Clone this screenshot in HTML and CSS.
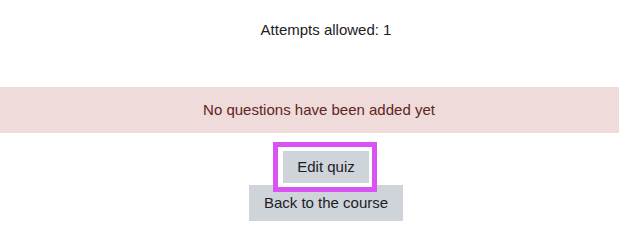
FILE: index.html
```html
<!DOCTYPE html>
<html>
<head>
<meta charset="utf-8">
<link rel="stylesheet" href="styles.css">
</head>
<body>
<div class="page">
  <div class="info">
    <p class="attempts">Attempts allowed: 1</p>
  </div>
  <div class="alert">No questions have been added yet</div>
  <div class="actions">
    <button class="btn btn-focus" type="button">Edit quiz</button>
    <button class="btn" type="button">Back to the course</button>
  </div>
</div>
</body>
</html>
```
FILE: styles.css
```css
html, body {
  margin: 0;
  padding: 0;
  background: #ffffff;
}
body {
  font-family: "Liberation Sans", Arial, sans-serif;
  font-size: 15px;
  line-height: 22.5px;
  color: #1d2125;
}
.page {
  display: flex;
  flex-direction: column;
}
.info {
  padding: 19px 0 0 33px;
  text-align: center;
}
.attempts {
  margin: 0;
}
.alert {
  margin-top: 45px;
  padding: 12px 0 12px 19px;
  background: #efdbd9;
  color: #5e2522;
  text-align: center;
}
.actions {
  margin-top: 16px;
  padding-left: 33px;
  display: flex;
  flex-direction: column;
  align-items: center;
}
.btn {
  font-family: "Liberation Sans", Arial, sans-serif;
  font-size: 15px;
  line-height: 22px;
  color: #1d2125;
  background: #ced4da;
  border: none;
  border-radius: 0;
  padding: 7px 15px;
  margin: 0;
  cursor: pointer;
}
.btn-focus {
  padding: 7px 16px;
  position: relative;
  z-index: 1;
  box-shadow: inset 0 0 0 2px #ffffff, -1px 0 0 2px #ffffff, -1px 0 0 7px #d852f4;
}
```
